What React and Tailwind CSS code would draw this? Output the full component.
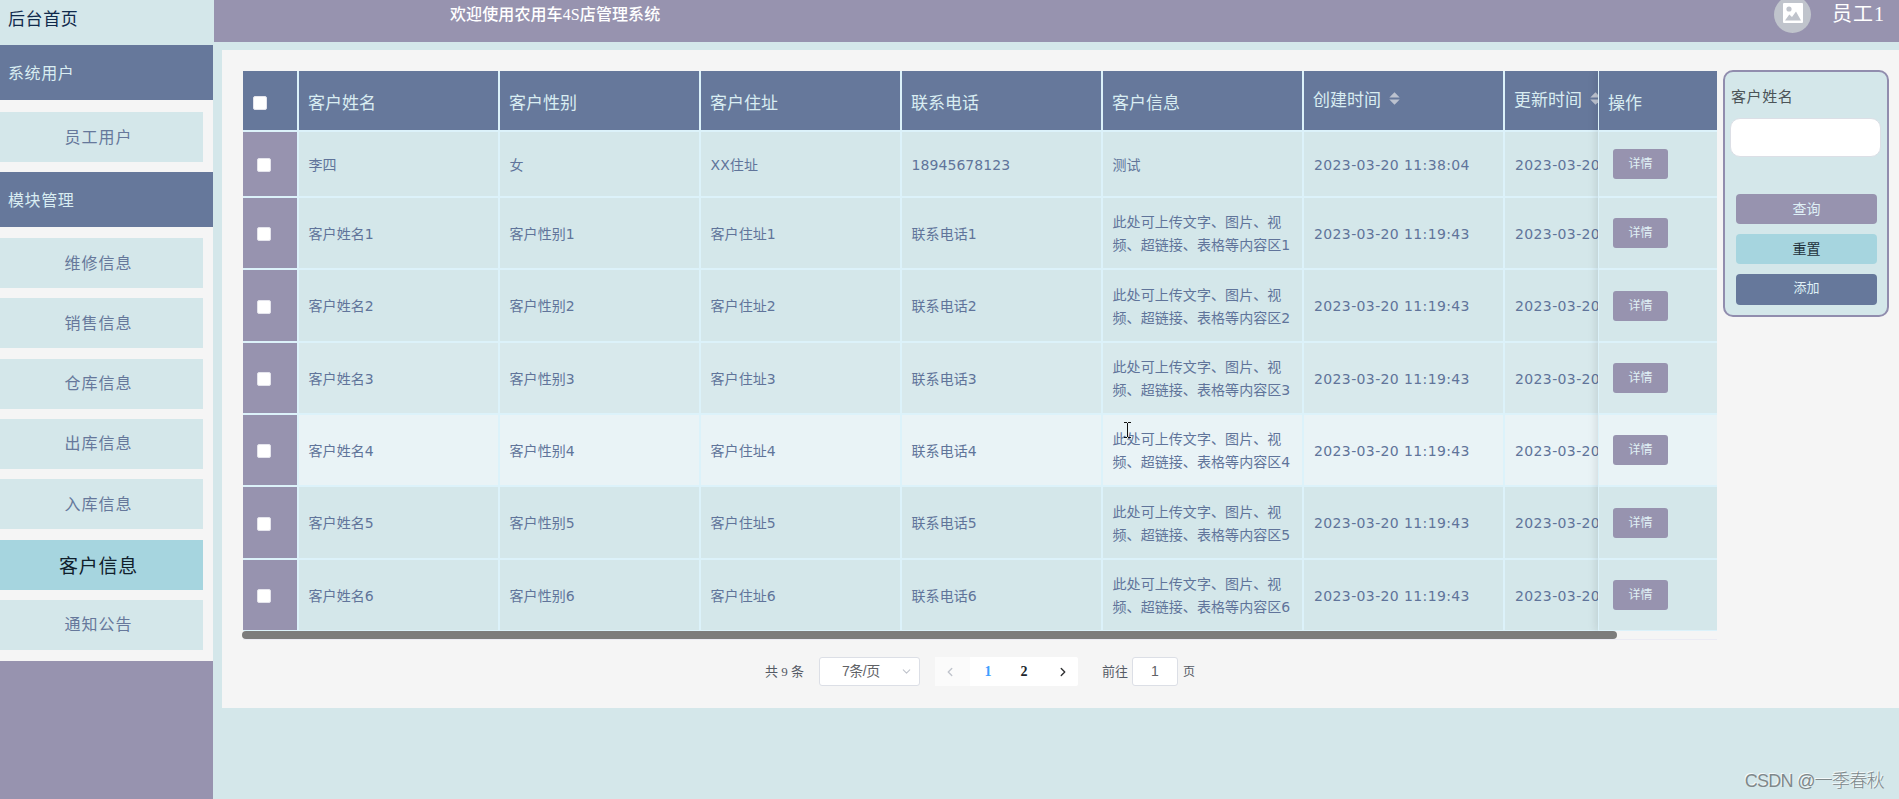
import React from "react";
import { ChevronDown, ChevronLeft, ChevronRight } from "lucide-react";

const kai = "font-[KaiTi,'Liberation_Serif','Noto_Sans_CJK_SC',serif]";

const columns = ["客户姓名", "客户性别", "客户住址", "联系电话", "客户信息"];

const info = (n) => `此处可上传文字、图片、视频、超链接、表格等内容区${n}`;
const numbered = (n, height, bg) => ({
  height,
  bg,
  cells: [`客户姓名${n}`, `客户性别${n}`, `客户住址${n}`, `联系电话${n}`, info(n)],
  time: "2023-03-20 11:19:43",
});

const rows = [
  {
    height: "h-[66px]",
    bg: "bg-[#d4e7ea]",
    cells: ["李四", "女", "XX住址", "18945678123", "测试"],
    time: "2023-03-20 11:38:04",
  },
  numbered(1, "h-[72px]", "bg-[#d4e7ea]"),
  numbered(2, "h-[73px]", "bg-[#d4e7ea]"),
  numbered(3, "h-[72px]", "bg-[#d8e9ec]"),
  numbered(4, "h-[72px]", "bg-[#e9f3f6]"),
  numbered(5, "h-[73px]", "bg-[#d4e7ea]"),
  numbered(6, "h-[72px]", "bg-[#d4e7ea]"),
];

const menu = ["维修信息", "销售信息", "仓库信息", "出库信息", "入库信息", "客户信息", "通知公告"];

function Box() {
  return <span className="block size-[14px] rounded-[2px] border border-[#e4e4ec] bg-white" />;
}

function MenuGroup({ children }) {
  return (
    <div className="flex h-[55px] items-center bg-[#66789b] pt-[2px] pl-2 text-[16px] tracking-[0.6px] text-[#d9edf2]">
      {children}
    </div>
  );
}

function MenuItem({ active, children }) {
  return (
    <div
      className={
        active
          ? "flex h-[50px] w-[203px] items-center justify-center bg-[#a6d5df] pt-[6px] pr-[6px] text-[19px] tracking-[0.8px] text-[#10202c]"
          : "flex h-[50px] w-[203px] items-center justify-center bg-[#d4e7ea] pt-px pr-[6px] text-[16px] tracking-[1px] text-[#66789b]"
      }
    >
      {children}
    </div>
  );
}

function Sidebar() {
  return (
    <aside className={`flex h-full w-[213px] shrink-0 flex-col bg-[#9793af] ${kai}`}>
      <div className="flex h-[45px] items-start bg-[#d4e7ea] pt-[6px] pl-2 text-[17px] leading-[28px] tracking-[0.6px] text-[#102a4c]">
        后台首页
      </div>
      <MenuGroup>系统用户</MenuGroup>
      <div className="flex h-[72px] flex-col bg-[#f5f5f5] pt-3">
        <MenuItem>员工用户</MenuItem>
      </div>
      <MenuGroup>模块管理</MenuGroup>
      <div className="flex h-[434px] flex-col gap-[10.33px] bg-[#f5f5f5] pt-[11px]">
        {menu.map((m) => (
          <MenuItem key={m} active={m === "客户信息"}>
            {m}
          </MenuItem>
        ))}
      </div>
    </aside>
  );
}

function Sort() {
  return (
    <svg className="ml-[8px] h-[13px] w-[11px] shrink-0" viewBox="0 0 11 13">
      <path d="M0.300 5.500 5.500 0.300 10.700 5.500z" fill="#bcc2cf" />
      <path d="M0.300 7.500 5.500 12.700 10.700 7.500z" fill="#bcc2cf" />
    </svg>
  );
}

function HeadCell({ children, sort, last }) {
  return (
    <div
      className={`flex shrink-0 items-center overflow-hidden whitespace-nowrap bg-[#66789b] pl-[9px] ${
        last ? "w-[94px]" : "w-[201px] border-r-2 border-[#dcf2fa]"
      } ${sort ? "pb-[4px]" : "pt-[2px]"}`}
    >
      {children}
      {sort && <Sort />}
    </div>
  );
}

function Table() {
  return (
    <div className="flex w-[1474px] flex-col font-['DejaVu_Sans','Noto_Sans_CJK_SC',sans-serif] text-[14px] text-[#60749a]">
      <div className="flex overflow-hidden">
        <div className="w-[1355px] shrink-0 overflow-hidden">
          <div className="flex h-[61px] border-b-2 border-[#dcf2fa] font-['Noto_Sans_CJK_SC',sans-serif] text-[17px] text-[#d9edf2]">
            <div className="flex w-[56px] shrink-0 items-center border-r-2 border-[#dcf2fa] bg-[#66789b] pt-[4px] pl-[10px]">
              <Box />
            </div>
            {columns.map((c) => (
              <HeadCell key={c}>{c}</HeadCell>
            ))}
            <HeadCell sort>创建时间</HeadCell>
            <HeadCell sort last>更新时间</HeadCell>
          </div>
          {rows.map((r, i) => (
            <div key={i} className={`flex border-b-2 border-[#dcf2fa] ${r.height} ${r.bg}`}>
              <div className="flex w-[56px] shrink-0 items-center border-r-2 border-[#dcf2fa] bg-[#9793af] pt-[2px] pl-[14px]">
                <Box />
              </div>
              {r.cells.map((c, j) => (
                <div
                  key={j}
                  className="flex w-[201px] shrink-0 items-center border-r-2 border-[#dcf2fa] pt-[2px] pl-[9.5px] leading-[23px]"
                >
                  <span className="w-[182px] tracking-[0.07px] break-all">{c}</span>
                </div>
              ))}
              <div className="flex w-[201px] shrink-0 items-center border-r-2 border-[#dcf2fa] pt-[2px] pl-[10px] tracking-[0.38px]">
                {r.time}
              </div>
              <div className="flex w-[94px] shrink-0 items-center overflow-hidden whitespace-nowrap pt-[2px] pl-[10px] tracking-[0.38px]">
                {r.time}
              </div>
            </div>
          ))}
        </div>
        <div className="w-[119px] shrink-0 shadow-[0_0_10px_rgba(0,0,0,0.14)]">
          <div className="flex h-[61px] items-center border-b-2 border-l border-[#dcf2fa] bg-[#66789b] pt-[2px] pl-[9px] font-['Noto_Sans_CJK_SC',sans-serif] text-[17px] text-[#d9edf2]">
            操作
          </div>
          {rows.map((r, i) => (
            <div
              key={i}
              className={`flex items-center border-b-2 border-l border-[#dcf2fa] pl-[14px] ${r.height} ${r.bg}`}
            >
              <button className="h-[30px] w-[55px] rounded-[3px] bg-[#9793af] text-[12px] text-[#e1f1f6]">
                详情
              </button>
            </div>
          ))}
        </div>
      </div>
      <div className="-mt-px h-[9px] border-b border-[#ebebf3] bg-[#f5f5f5]">
        <div className="-ml-px h-2 w-[1375px] rounded-[4px] bg-[#7c7c7c]" />
      </div>
    </div>
  );
}

function Pagination() {
  return (
    <div className={`mt-[17px] flex h-[29px] items-center pl-[522px] text-[13px] text-[#555b66] ${kai}`}>
      <span className="w-[54px] whitespace-nowrap">共 9 条</span>
      <div className="flex h-[29px] w-[101px] items-center rounded-[3px] border border-[#dcdfe6] bg-white pb-px pl-[22px] font-['Liberation_Sans','Noto_Sans_CJK_SC',sans-serif] text-[14px] tracking-[-0.5px] text-[#606266]">
        <span className="w-[58px]">7条/页</span>
        <ChevronDown className="size-[13px] text-[#c0c4cc]" strokeWidth={2} />
      </div>
      <div className="ml-[15px] flex h-[29px] items-center rounded-[2px] bg-white text-[14px] font-bold">
        <span className="flex h-full w-[35px] items-center bg-[#fbfbfb] pl-2">
          <ChevronLeft className="size-[14px] text-[#c0c4cc]" strokeWidth={2.4} />
        </span>
        <span className="w-[36px] text-center text-[#409eff]">1</span>
        <span className="w-[36px] text-center text-[#20242c]">2</span>
        <span className="flex w-[36px] justify-center pl-[6px]">
          <ChevronRight className="size-[14px] text-[#303133]" strokeWidth={2.4} />
        </span>
      </div>
      <span className="ml-[24px] w-[30px] whitespace-nowrap">前往</span>
      <span className="flex h-[29px] w-[46px] items-center justify-center rounded-[3px] border border-[#dcdfe6] bg-white font-['Liberation_Sans',sans-serif] text-[14px] text-[#606266]">
        1
      </span>
      <span className="ml-[5px] text-[12px]">页</span>
    </div>
  );
}

function SearchCard() {
  return (
    <div className="flex h-[247px] w-[166px] flex-col rounded-[10px] border-2 border-[#918dae] bg-[#d4e7ea] px-[5px] font-['Noto_Sans_CJK_SC',sans-serif]">
      <label className={`mt-[13px] ml-px h-[24px] text-[15px] leading-[24px] tracking-[0.6px] text-[#4c5458] ${kai}`}>
        客户姓名
      </label>
      <input className="mt-[9px] h-[39px] w-[151px] rounded-[10px] border border-[#dcdfe6] bg-white px-3 outline-none" />
      <div className="mt-[37px] flex flex-col gap-[10px] pr-[5px] pl-[6px] text-[14px]">
        <button className="h-[30px] rounded-[4px] bg-[#9793af] pb-[2px] text-[#dff0f6]">查询</button>
        <button className="h-[30px] rounded-[4px] bg-[#a6d5df] pb-[2px] text-[#23323c]">重置</button>
        <button className={`h-[31px] rounded-[4px] bg-[#66789b] pb-[3px] text-[13px] text-[#dff0f6] ${kai}`}>添加</button>
      </div>
    </div>
  );
}

function Header() {
  return (
    <header className={`ml-px flex h-[42px] items-start justify-between bg-[#9793af] pr-[14px] pl-[236px] text-white ${kai}`}>
      <h1 className="mt-[3px] text-[16px] leading-[24px] font-medium tracking-[0.1px]">欢迎使用农用车4S店管理系统</h1>
      <div className="flex items-start">
        <div className="-mt-[4px] flex size-[37px] items-center justify-center rounded-full bg-[#c0c4cc]">
          <svg viewBox="0 0 20 20" className="-mt-[3px] size-5">
            <rect width="20" height="20" rx="1" fill="#fff" />
            <circle cx="6" cy="6" r="2.6" fill="#c0c4cc" />
            <path d="M2 17.500 6.300 11.500 9 14 13 8.500 18 17.500z" fill="#c0c4cc" />
          </svg>
        </div>
        <span className="ml-[21px] pt-px text-[20px] leading-[26px] tracking-[1px]">员工1</span>
      </div>
    </header>
  );
}

export default function App() {
  return (
    <div className="relative flex h-[799px] w-[1899px] overflow-hidden bg-[#d4e7ea]">
      <Sidebar />
      <div className="flex min-w-0 flex-1 flex-col">
        <Header />
        <main className="mt-2 ml-[9px] flex h-[658px] bg-[#f5f5f5] pt-5 pl-[21px]">
          <div className="mt-px mr-[6px]">
            <Table />
            <Pagination />
          </div>
          <SearchCard />
        </main>
      </div>
      <svg className="absolute top-[421px] left-[1123px] h-[18px] w-[9px]" viewBox="0 0 9 18" fill="none" stroke="#111">
        <path d="M1 1.500H4M5 1.500H8M4.500 2V16M1 16.500H4M5 16.500H8" />
      </svg>
      <div className="absolute right-[15px] bottom-[4px] font-['Liberation_Sans','Noto_Sans_CJK_SC',sans-serif] text-[18px] leading-[28px] font-light tracking-[-0.7px] text-[#7f888a] [text-shadow:-1px_-1px_0_#f4fafb]">
        CSDN @一季春秋
      </div>
    </div>
  );
}
